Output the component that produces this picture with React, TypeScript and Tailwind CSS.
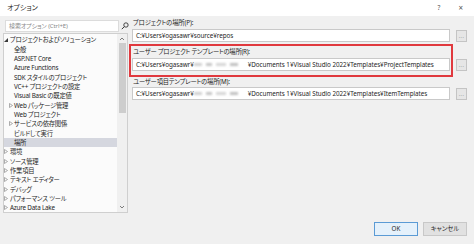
import React from "react";

const Expanded = () => (
  <svg width="4" height="4" viewBox="0 0 4 4" className="shrink-0">
    <polygon points="4,0 4,4 0,4" fill="#3a3a3a" />
  </svg>
);

const Collapsed = () => (
  <svg width="4" height="5" viewBox="0 0 4 5" className="shrink-0">
    <polygon points="0.5,0.5 3.5,2.5 0.5,4.5" fill="none" stroke="#8a8a8a" strokeWidth="0.7" />
  </svg>
);

type Item = { label: string; level: 0 | 1; exp?: "open" | "closed"; selected?: boolean };

const items: Item[] = [
  { label: "プロジェクトおよびソリューション", level: 0, exp: "open" },
  { label: "全般", level: 1 },
  { label: "ASP.NET Core", level: 1 },
  { label: "Azure Functions", level: 1 },
  { label: "SDK スタイルのプロジェクト", level: 1 },
  { label: "VC++ プロジェクトの設定", level: 1 },
  { label: "Visual Basic の既定値", level: 1 },
  { label: "Web パッケージ管理", level: 1, exp: "closed" },
  { label: "Web プロジェクト", level: 1 },
  { label: "サービスの依存関係", level: 1, exp: "closed" },
  { label: "ビルドして実行", level: 1 },
  { label: "場所", level: 1, selected: true },
  { label: "環境", level: 0, exp: "closed" },
  { label: "ソース管理", level: 0, exp: "closed" },
  { label: "作業項目", level: 0, exp: "closed" },
  { label: "テキスト エディター", level: 0, exp: "closed" },
  { label: "デバッグ", level: 0, exp: "closed" },
  { label: "パフォーマンス ツール", level: 0, exp: "closed" },
  { label: "Azure Data Lake", level: 0, exp: "closed" },
];

const Browse = () => (
  <div className="w-[11px] h-[12px] shrink-0 border border-[#c4c4c4] bg-[#e6e6e6] flex items-end justify-center pb-[2px]">
    <span className="text-[5px] leading-[5px] text-[#8a8a8a] tracking-[0.5px]">...</span>
  </div>
);

const Field = ({ children, ml }: { children: React.ReactNode; ml: string }) => (
  <div className={`w-[318px] h-[13px] bg-white border border-[#c9c9c9] flex items-center pl-[3px] whitespace-nowrap overflow-hidden text-[6.3px] tracking-[-0.05px] text-[#1e1e1e] ${ml}`}>
    {children}
  </div>
);

const Blur = () => (
  <span className="inline-flex w-[54px] items-center gap-[4px] blur-[1.2px] overflow-hidden">
    <span className="w-[8px] h-[3px] bg-[#d0d0d0]" />
    <span className="w-[6px] h-[3px] bg-[#c4c4c4]" />
    <span className="w-[10px] h-[3px] bg-[#d6d6d6]" />
    <span className="w-[8px] h-[3px] bg-[#c0c0c0]" />
  </span>
);

export default function App() {
  return (
    <div className="w-[474px] h-[244px] bg-[#f0f0f0] flex flex-col overflow-hidden text-[#1e1e1e] font-['Noto_Sans','Noto_Sans_CJK_JP',sans-serif] [font-feature-settings:'palt']">
      {/* title bar */}
      <div className="h-[16px] bg-white flex items-center justify-between pl-[7px] pr-[11px] shrink-0">
        <span className="text-[7px] leading-[8px]">オプション</span>
        <div className="flex items-center gap-[18px] text-[#555] text-[6.5px] leading-[8px]">
          <span>?</span>
          <span className="text-[8px]">×</span>
        </div>
      </div>

      {/* main */}
      <div className="flex h-[197px] shrink-0">
        {/* left */}
        <div className="w-[129px] pl-[3px] flex flex-col shrink-0">
          <div className="mt-[4px] h-[12px] flex items-center">
            <div className="ml-[2px] w-[115px] h-[12px] bg-white border border-[#dcdcdc] flex items-center pl-[3px]">
              <span className="text-[6px] tracking-[-0.1px] text-[#8a8a8a] leading-[8px]">検索オプション (Ctrl+E)</span>
            </div>
            <svg width="8" height="8" viewBox="0 0 8 8" className="ml-[2px]">
              <circle cx="5" cy="3" r="2.2" fill="none" stroke="#333" strokeWidth="0.9" />
              <line x1="3.4" y1="4.6" x2="0.8" y2="7.2" stroke="#333" strokeWidth="1" />
            </svg>
          </div>
          <div className="mt-[1px] h-[180px] w-[125px] bg-[#fbfbfb] border border-[#cfcfcf] flex">
            <div className="flex-1 pt-[1.3px] flex flex-col">
              {items.map((it, i) => (
                <div
                  key={i}
                  className={`h-[9.33px] flex items-center whitespace-nowrap text-[6.3px] tracking-[-0.2px] ${it.selected ? "bg-[#d5d7df]" : ""} ${it.level === 0 ? "pl-[0px]" : "pl-[5px]"}`}
                >
                  <span className={`w-[4px] flex items-center justify-center ${it.level === 0 ? "mr-[2px]" : "mr-[1px]"}`}>
                    {it.exp === "open" ? <Expanded /> : it.exp === "closed" ? <Collapsed /> : null}
                  </span>
                  <span>{it.label}</span>
                </div>
              ))}
            </div>
            <div className="w-[10px] bg-[#f0f0f0] flex flex-col items-center">
              <svg width="6" height="6" viewBox="0 0 6 6" className="mt-[2px]">
                <polyline points="1,4 3,2 5,4" fill="none" stroke="#606060" strokeWidth="0.8" />
              </svg>
              <div className="mt-[1px] w-[7px] h-[70px] bg-[#cdcdcd]" />
              <div className="flex-1" />
              <svg width="6" height="6" viewBox="0 0 6 6" className="mb-[2px]">
                <polyline points="1,2 3,4 5,2" fill="none" stroke="#606060" strokeWidth="0.8" />
              </svg>
            </div>
          </div>
        </div>

        {/* right */}
        <div className="flex flex-col w-[345px]">
          <div className="mt-[3px] h-[8px] flex items-center pl-[4px] text-[6.3px] tracking-[-0.1px] leading-[8px]">プロジェクトの場所(P):</div>
          <div className="mt-[2px] flex items-center">
            <Field ml="ml-[3px]">C:¥Users¥ogasawr¥source¥repos</Field>
            <div className="ml-[6px]"><Browse /></div>
          </div>

          <div className="mt-[2px] flex items-end">
            <div className="w-[324px] h-[33px] border-2 border-[#e0393e] flex flex-col">
              <div className="mt-[2px] h-[8px] flex items-center pl-[2px] text-[6.3px] tracking-[-0.25px] leading-[8px]">ユーザー プロジェクト テンプレートの場所(R):</div>
              <div className="mt-[2px]">
                <Field ml="ml-[1px]">
                  C:¥Users¥ogasawr¥<Blur />¥Documents 1¥Visual Studio 2022¥Templates¥ProjectTemplates
                </Field>
              </div>
            </div>
            <div className="ml-[3px] mb-[6px]"><Browse /></div>
          </div>

          <div className="mt-[1px] h-[8px] flex items-center pl-[4px] text-[6.3px] tracking-[-0.2px] leading-[8px]">ユーザー項目テンプレートの場所(M):</div>
          <div className="mt-[1px] flex items-center">
            <Field ml="ml-[3px]">
              C:¥Users¥ogasawr¥<Blur />¥Documents 1¥Visual Studio 2022¥Templates¥ItemTemplates
            </Field>
            <div className="ml-[6px]"><Browse /></div>
          </div>
        </div>
      </div>

      {/* buttons */}
      <div className="mt-[9px] flex justify-end pr-[7px] gap-[5px]">
        <div className="w-[44px] h-[14px] border border-[#5b9bd5] bg-[#e5f1fb] flex items-center justify-center text-[6.3px]">OK</div>
        <div className="w-[44px] h-[14px] border border-[#c8c8c8] bg-[#e1e1e1] flex items-center justify-center text-[6.3px]">キャンセル</div>
      </div>
    </div>
  );
}
